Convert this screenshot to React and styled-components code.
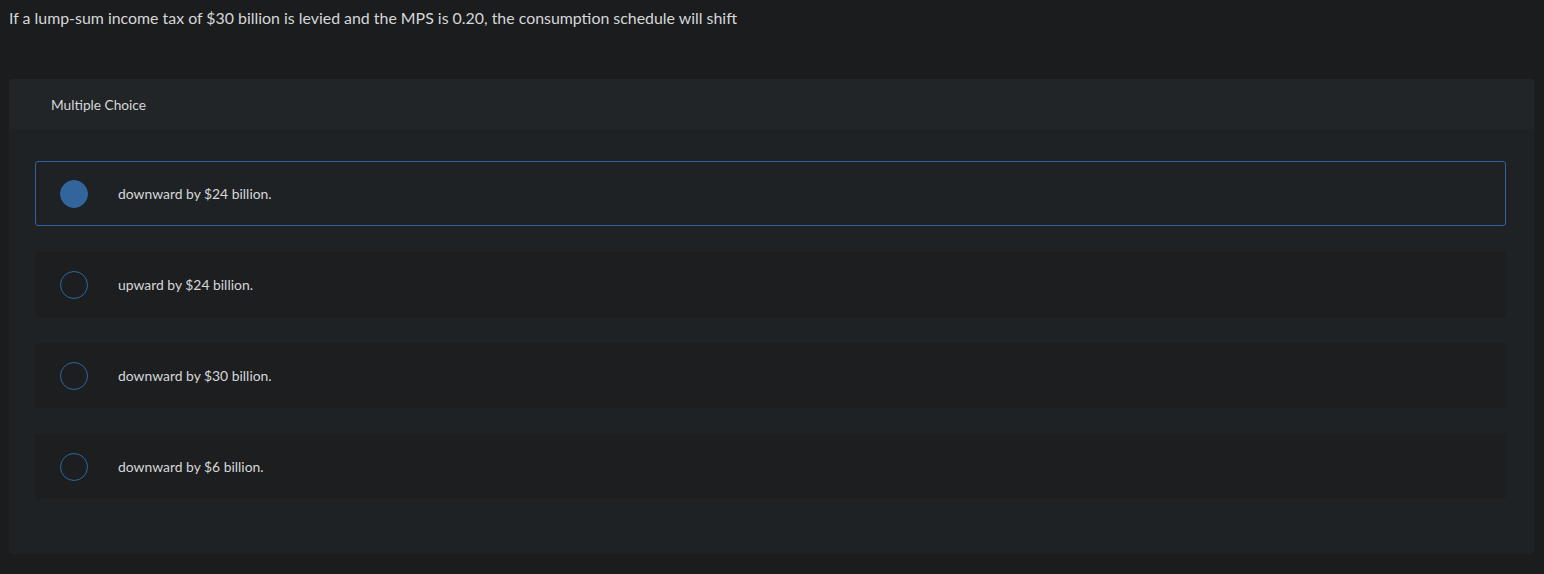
import React from 'react';
import styled, { createGlobalStyle } from 'styled-components';

const GlobalStyle = createGlobalStyle`
  html, body {
    margin: 0;
    padding: 0;
    background: #1b1c1e;
    font-family: Lato, "Noto Sans", sans-serif;
  }
`;

const Page = styled.div`
  padding: 8px 10px 20px 9px;
  min-height: 574px;
  box-sizing: border-box;
`;

const Question = styled.div`
  color: #d6d7d8;
  font-size: 15.9px;
  line-height: 20px;
  margin: 0 0 51px 0;
`;

const Card = styled.div`
  background: #1f2224;
  border-radius: 3px;
  padding-bottom: 55px;
`;

const CardHeader = styled.div`
  background: #212527;
  height: 50px;
  display: flex;
  align-items: center;
  padding-left: 42px;
  color: #d6d7d8;
  font-size: 13.7px;
  border-radius: 3px 3px 0 0;
`;

const Options = styled.div`
  display: flex;
  flex-direction: column;
  gap: 26px;
  padding: 32px 28px 0 26px;
`;

const Option = styled.label`
  height: 65px;
  box-sizing: border-box;
  display: flex;
  align-items: center;
  padding-left: 24px;
  border-radius: 3px;
  background: ${p => (p.$selected ? '#1f2224' : '#1c1e20')};
  border: 1px solid ${p => (p.$selected ? '#2d64a0' : 'transparent')};
  cursor: pointer;
`;

const Radio = styled.span`
  width: 28px;
  height: 28px;
  box-sizing: border-box;
  border-radius: 50%;
  border: 1.5px solid #2e67a0;
  background: ${p => (p.$selected ? '#32659b' : 'transparent')};
  flex-shrink: 0;
`;

const OptionText = styled.span`
  margin-left: 30px;
  color: #d6d7d8;
  font-size: 13.9px;
`;

const choices = [
  'downward by $24 billion.',
  'upward by $24 billion.',
  'downward by $30 billion.',
  'downward by $6 billion.',
];

export default function App() {
  const selected = 0;
  return (
    <>
      <GlobalStyle />
      <Page>
        <Question>
          If a lump-sum income tax of $30 billion is levied and the MPS is 0.20, the consumption schedule will shift
        </Question>
        <Card>
          <CardHeader>Multiple Choice</CardHeader>
          <Options>
            {choices.map((c, i) => (
              <Option key={c} $selected={i === selected}>
                <Radio $selected={i === selected} />
                <OptionText>{c}</OptionText>
              </Option>
            ))}
          </Options>
        </Card>
      </Page>
    </>
  );
}
